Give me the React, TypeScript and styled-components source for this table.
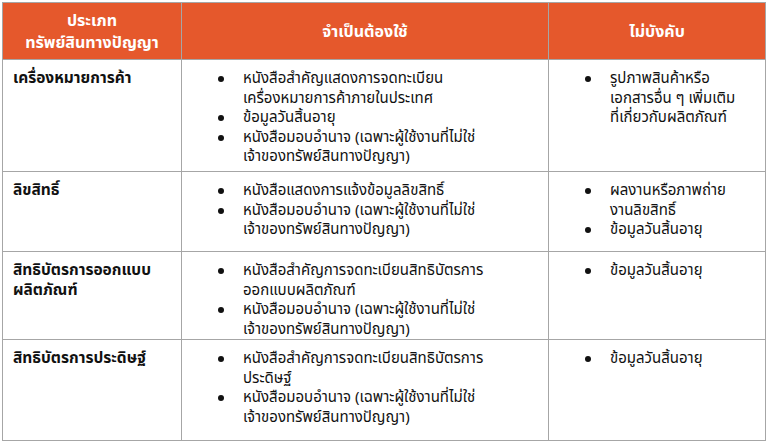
import React from 'react';
import styled, { createGlobalStyle } from 'styled-components';

const GlobalStyle = createGlobalStyle`
  html, body {
    margin: 0;
    padding: 0;
    background: #ffffff;
  }
  body {
    font-family: Tahoma, "Noto Sans Thai", "Noto Sans", "DejaVu Sans", sans-serif;
    color: #111111;
  }
`;

const Page = styled.div`
  padding: 2px 5px 0 2px;
`;

const Table = styled.table`
  width: 763px;
  border-collapse: collapse;
  table-layout: fixed;
  font-size: 15px;
  line-height: 19.5px;

  th, td {
    box-sizing: border-box;
  }
`;

const HeadCell = styled.th<{ $width: number }>`
  width: ${p => p.$width}px;
  background: #e5582c;
  color: #ffffff;
  font-weight: bold;
  font-size: 16px;
  line-height: 22px;
  text-align: center;
  vertical-align: middle;
  border: 1px solid #a6a6a6;
  height: 57px;
  padding: 2px 8px 0;
`;

const Row = styled.tr<{ $height: number }>`
  height: ${p => p.$height}px;
`;

const TypeCell = styled.td`
  border: 1px solid #a6a6a6;
  vertical-align: top;
  font-weight: bold;
  font-size: 15.5px;
  padding: 9px 6px 0 10px;
`;

const ListCell = styled.td`
  border: 1px solid #a6a6a6;
  vertical-align: top;
  padding: 9px 4px 0 0;
`;

const BulletList = styled.ul`
  list-style: none;
  margin: 0;
  padding: 0 0 0 61px;
`;

const Item = styled.li`
  position: relative;
  white-space: nowrap;
  &::before {
    content: '';
    position: absolute;
    left: -25px;
    top: 7px;
    width: 6px;
    height: 6px;
    border-radius: 50%;
    background: #111111;
  }
`;

type Entry = {
  type: string[];
  required: string[][];
  optional: string[][];
  height: number;
};

const rows: Entry[] = [
  {
    type: ['เครื่องหมายการค้า'],
    required: [
      ['หนังสือสำคัญแสดงการจดทะเบียน', 'เครื่องหมายการค้าภายในประเทศ'],
      ['ข้อมูลวันสิ้นอายุ'],
      ['หนังสือมอบอำนาจ (เฉพาะผู้ใช้งานที่ไม่ใช่', 'เจ้าของทรัพย์สินทางปัญญา)'],
    ],
    optional: [['รูปภาพสินค้าหรือ', 'เอกสารอื่น ๆ เพิ่มเติม', 'ที่เกี่ยวกับผลิตภัณฑ์']],
    height: 112,
  },
  {
    type: ['ลิขสิทธิ์'],
    required: [
      ['หนังสือแสดงการแจ้งข้อมูลลิขสิทธิ์'],
      ['หนังสือมอบอำนาจ (เฉพาะผู้ใช้งานที่ไม่ใช่', 'เจ้าของทรัพย์สินทางปัญญา)'],
    ],
    optional: [['ผลงานหรือภาพถ่าย', 'งานลิขสิทธิ์'], ['ข้อมูลวันสิ้นอายุ']],
    height: 80,
  },
  {
    type: ['สิทธิบัตรการออกแบบ', 'ผลิตภัณฑ์'],
    required: [
      ['หนังสือสำคัญการจดทะเบียนสิทธิบัตรการ', 'ออกแบบผลิตภัณฑ์'],
      ['หนังสือมอบอำนาจ (เฉพาะผู้ใช้งานที่ไม่ใช่', 'เจ้าของทรัพย์สินทางปัญญา)'],
    ],
    optional: [['ข้อมูลวันสิ้นอายุ']],
    height: 87,
  },
  {
    type: ['สิทธิบัตรการประดิษฐ์'],
    required: [
      ['หนังสือสำคัญการจดทะเบียนสิทธิบัตรการ', 'ประดิษฐ์'],
      ['หนังสือมอบอำนาจ (เฉพาะผู้ใช้งานที่ไม่ใช่', 'เจ้าของทรัพย์สินทางปัญญา)'],
    ],
    optional: [['ข้อมูลวันสิ้นอายุ']],
    height: 101,
  },
];

const Lines: React.FC<{ lines: string[] }> = ({ lines }) => (
  <>
    {lines.map((l, i) => (
      <React.Fragment key={i}>
        {i > 0 && <br />}
        {l}
      </React.Fragment>
    ))}
  </>
);

const Items: React.FC<{ items: string[][] }> = ({ items }) => (
  <BulletList>
    {items.map((it, i) => (
      <Item key={i}>
        <Lines lines={it} />
      </Item>
    ))}
  </BulletList>
);

export default function App() {
  return (
    <Page>
      <GlobalStyle />
      <Table>
        <thead>
          <tr>
            <HeadCell $width={179}>
              ประเภท
              <br />
              ทรัพย์สินทางปัญญา
            </HeadCell>
            <HeadCell $width={367}>จำเป็นต้องใช้</HeadCell>
            <HeadCell $width={217}>ไม่บังคับ</HeadCell>
          </tr>
        </thead>
        <tbody>
          {rows.map((r, i) => (
            <Row key={i} $height={r.height}>
              <TypeCell>
                <Lines lines={r.type} />
              </TypeCell>
              <ListCell>
                <Items items={r.required} />
              </ListCell>
              <ListCell>
                <Items items={r.optional} />
              </ListCell>
            </Row>
          ))}
        </tbody>
      </Table>
    </Page>
  );
}
